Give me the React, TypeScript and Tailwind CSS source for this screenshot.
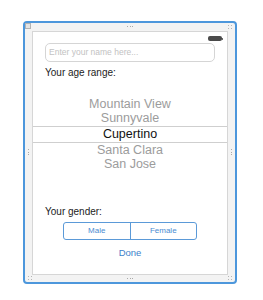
const font = { fontFamily: '"Liberation Sans", Arial, sans-serif' }

function Dots({ vertical = false }: { vertical?: boolean }) {
  return (
    <div className={vertical ? "flex flex-col gap-[1.5px]" : "flex gap-[1.5px]"}>
      <span className="block w-px h-px bg-[#a9a9a9]" />
      <span className="block w-px h-px bg-[#a9a9a9]" />
      <span className="block w-px h-px bg-[#a9a9a9]" />
    </div>
  )
}

function CornerDots() {
  return (
    <div className="grid grid-cols-2 gap-[2px]">
      <span className="block w-px h-px bg-[#b5b5b5]" />
      <span className="block w-px h-px bg-[#b5b5b5]" />
      <span className="block w-px h-px bg-[#b5b5b5]" />
      <span className="block w-px h-px bg-[#b5b5b5]" />
    </div>
  )
}

export default function App() {
  const cities = [
    { name: "Mountain View", selected: false },
    { name: "Sunnyvale", selected: false },
    { name: "Cupertino", selected: true },
    { name: "Santa Clara", selected: false },
    { name: "San Jose", selected: false },
  ]

  return (
    <div className="w-[263px] h-[300px] bg-white pt-[21px] pl-[23px]" style={font}>
      <div className="relative w-[214px] h-[263px] rounded-[4px] border-2 border-[#4d97dc] bg-[#f3f3f3] pt-[8px] px-[7px] pb-[7px]">
        {/* frame handles */}
        <div className="absolute left-0 top-0 w-[6px] h-[6px] border border-[#b3b3b3] bg-[#e4e4e4]" />
        <div className="absolute left-[102px] top-[3px]">
          <Dots />
        </div>
        <div className="absolute right-[3px] top-[2px]">
          <CornerDots />
        </div>
        <div className="absolute left-[3px] top-[126px]">
          <Dots vertical />
        </div>
        <div className="absolute right-[3px] top-[126px]">
          <Dots vertical />
        </div>
        <div className="absolute left-[3px] bottom-[2px]">
          <CornerDots />
        </div>
        <div className="absolute left-[102px] bottom-[3px]">
          <Dots />
        </div>
        <div className="absolute right-[3px] bottom-[2px]">
          <CornerDots />
        </div>

        {/* device screen */}
        <div className="h-full bg-white border border-[#d6d6d6] flex flex-col">
          <div className="flex justify-end pr-[4px] mt-[4px]">
            <div className="flex items-center">
              <div className="w-[14px] h-[5px] rounded-[2px] bg-[#4a4a4a]" />
              <div className="w-px h-[2px] bg-[#6a6a6a]" />
            </div>
          </div>

          <div className="mx-[12px] mt-[2px] h-[19px] rounded-[5px] border border-[#d5d5d5] flex items-center pl-[3px]">
            <span className="text-[8.5px] text-[#c2c2c2]">Enter your name here...</span>
          </div>

          <div className="mx-[12px] mt-[5px] text-[10px] leading-[12px] text-[#1c1c1c]">Your age range:</div>

          <div className="mt-[18px] flex flex-col">
            {cities.map((city) =>
              city.selected ? (
                <div
                  key={city.name}
                  className="h-[17px] border-y border-[#cfcfcf] flex items-center justify-center text-[12.5px] text-[#111111]"
                >
                  {city.name}
                </div>
              ) : (
                <div
                  key={city.name}
                  className="h-[14.5px] flex items-center justify-center text-[12.5px] text-[#9c9c9c]"
                >
                  {city.name}
                </div>
              )
            )}
          </div>

          <div className="mx-[12px] mt-[34px] text-[10px] leading-[12px] text-[#1c1c1c]">Your gender:</div>

          <div className="mt-[4px] self-center w-[134px] h-[18px] rounded-[3px] border border-[#5b9ad8] flex">
            <div className="flex-1 flex items-center justify-center text-[8px] text-[#4a8bd2] border-r border-[#5b9ad8]">
              Male
            </div>
            <div className="flex-1 flex items-center justify-center text-[8px] text-[#4a8bd2]">Female</div>
          </div>

          <div className="mt-[7px] text-center text-[9.5px] leading-[12px] text-[#3d7fca]">Done</div>
        </div>
      </div>
    </div>
  )
}
